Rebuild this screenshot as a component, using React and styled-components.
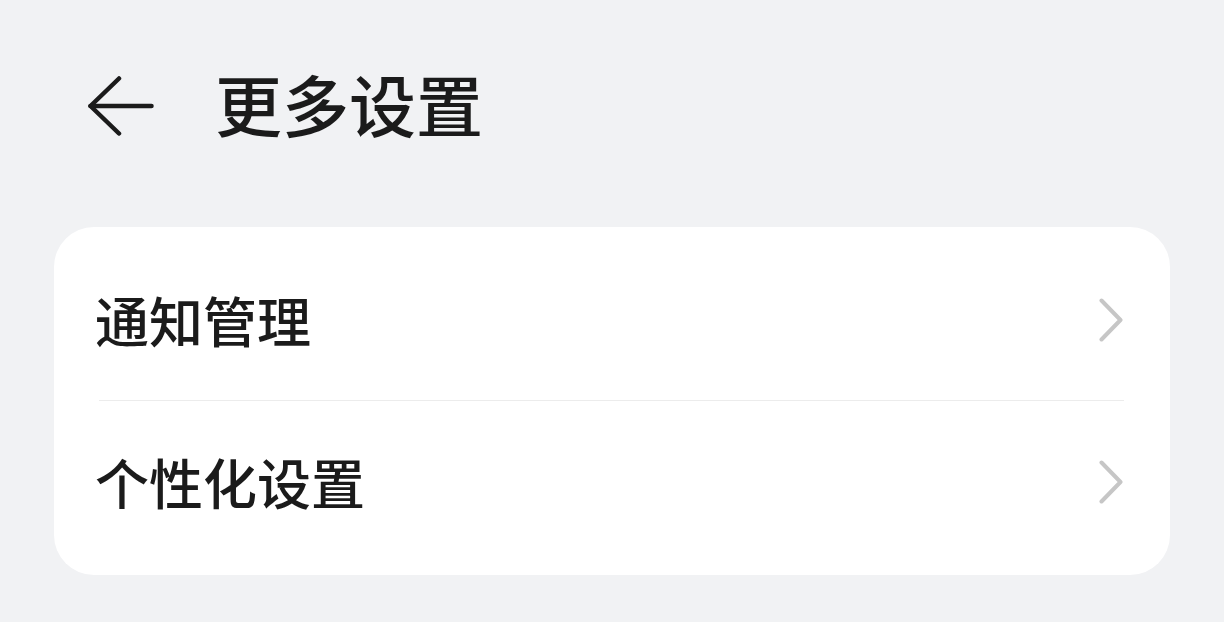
import React from "react";
import styled, { createGlobalStyle } from "styled-components";

const GlobalStyle = createGlobalStyle`
  html, body {
    margin: 0;
    padding: 0;
    background: #f1f2f4;
  }
  body {
    font-family: "Noto Sans CJK SC", "Noto Sans", sans-serif;
    color: #1b1b1b;
  }
`;

const Page = styled.div`
  width: 1224px;
  height: 622px;
  background: #f1f2f4;
  overflow: hidden;
`;

const Header = styled.header`
  height: 212px;
  display: flex;
  align-items: center;
  padding-left: 88px;
  gap: 61px;
`;

const BackButton = styled.button`
  display: flex;
  align-items: center;
  padding: 0;
  border: none;
  background: none;
  color: #1b1b1b;
  cursor: pointer;
`;

const Title = styled.h1`
  margin: 0 0 8px;
  font-size: 67px;
  font-weight: 500;
  line-height: 1;
  letter-spacing: 0;
`;

const Card = styled.div`
  margin: 15px 54px 0;
  background: #fff;
  border-radius: 40px;
  padding: 12px 0 13px;
`;

const Row = styled.div`
  height: 161px;
  display: flex;
  align-items: center;
  justify-content: space-between;
  padding: 0 47px 0 41px;
  cursor: pointer;
`;

const Label = styled.span`
  font-size: 54px;
  font-weight: 500;
  line-height: 1;
`;

const Divider = styled.div`
  height: 1px;
  margin: 0 46px 0 45px;
  background: #ececec;
`;

const Chevron = () => (
  <svg width="24" height="44" viewBox="0 0 24 44" fill="none">
    <polyline
      points="2.5,2.5 21.5,22 2.5,41.5"
      stroke="#c6c6c6"
      strokeWidth="4"
      strokeLinecap="round"
      strokeLinejoin="round"
    />
  </svg>
);

const BackArrow = () => (
  <svg width="66" height="60" viewBox="0 0 66 60" fill="none">
    <polyline
      points="31,2.5 2.5,30 31,57.5"
      stroke="currentColor"
      strokeWidth="4.5"
      strokeLinecap="round"
      strokeLinejoin="round"
    />
    <line
      x1="2.5"
      y1="30"
      x2="63.5"
      y2="30"
      stroke="currentColor"
      strokeWidth="4.5"
      strokeLinecap="round"
    />
  </svg>
);

const items = ["通知管理", "个性化设置"];

export default function App() {
  return (
    <Page>
      <GlobalStyle />
      <Header>
        <BackButton aria-label="返回">
          <BackArrow />
        </BackButton>
        <Title>更多设置</Title>
      </Header>
      <Card>
        {items.map((item, i) => (
          <React.Fragment key={item}>
            {i > 0 && <Divider />}
            <Row>
              <Label>{item}</Label>
              <Chevron />
            </Row>
          </React.Fragment>
        ))}
      </Card>
    </Page>
  );
}
